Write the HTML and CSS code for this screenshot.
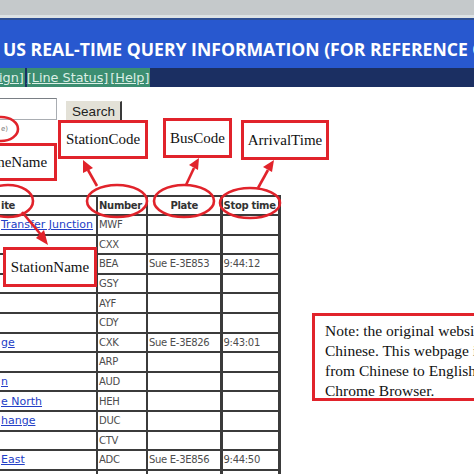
FILE: index.html
```html
<!DOCTYPE html>
<html>
<head>
<meta charset="utf-8">
<link rel="stylesheet" href="styles.css">
</head>
<body>
<div class="page">
  <div class="chrome"></div>
  <div class="title">US REAL-TIME QUERY INFORMATION (FOR REFERENCE ONLY)</div>
  <div class="nav">
    <span class="hl"><a href="#">ign]</a></span><span class="hl hl-wide"><a href="#">[Line Status]</a><a href="#">[Help]</a></span>
  </div>
  <div class="main">
    <div class="search">
      <input class="field" type="text">
      <button class="btn">Search</button>
    </div>
    <div class="hint">e)</div>
    <table class="grid">
      <tr class="head"><th class="c1">ite</th><th class="c2">Number</th><th class="c3">Plate</th><th class="c4">Stop time</th></tr>
      <tr><td><a href="#">Transfer Junction</a></td><td>MWF</td><td></td><td></td></tr>
      <tr><td></td><td>CXX</td><td></td><td></td></tr>
      <tr><td></td><td>BEA</td><td>Sue E-3E853</td><td>9:44:12</td></tr>
      <tr><td></td><td>GSY</td><td></td><td></td></tr>
      <tr><td></td><td>AYF</td><td></td><td></td></tr>
      <tr><td></td><td>CDY</td><td></td><td></td></tr>
      <tr><td><a href="#">ge</a></td><td>CXK</td><td>Sue E-3E826</td><td>9:43:01</td></tr>
      <tr><td></td><td>ARP</td><td></td><td></td></tr>
      <tr><td><a href="#">n</a></td><td>AUD</td><td></td><td></td></tr>
      <tr><td><a href="#">e North</a></td><td>HEH</td><td></td><td></td></tr>
      <tr><td><a href="#">hange</a></td><td>DUC</td><td></td><td></td></tr>
      <tr><td></td><td>CTV</td><td></td><td></td></tr>
      <tr><td><a href="#">East</a></td><td>ADC</td><td>Sue E-3E856</td><td>9:44:50</td></tr>
      <tr><td></td><td></td><td></td><td></td></tr>
    </table>
  </div>

  <div class="label l-line">LineName</div>
  <div class="label l-code">StationCode</div>
  <div class="label l-bus">BusCode</div>
  <div class="label l-time">ArrivalTime</div>
  <div class="label l-name">StationName</div>

  <svg class="marks" width="474" height="474" viewBox="0 0 474 474">
    <g fill="none" stroke="#e1232b" stroke-width="2.6">
      <ellipse cx="1" cy="129" rx="17" ry="12"/>
      <ellipse cx="8" cy="201" rx="25" ry="16"/>
      <ellipse cx="117" cy="201" rx="30" ry="16"/>
      <ellipse cx="184" cy="201" rx="30" ry="16"/>
      <ellipse cx="250" cy="203" rx="30" ry="15"/>
      <line x1="22" y1="212" x2="42" y2="236"/>
      <line x1="97" y1="186" x2="88" y2="170"/>
      <line x1="186" y1="185" x2="194" y2="168"/>
      <line x1="258" y1="188" x2="268" y2="170"/>
    </g>
    <g fill="#e1232b">
      <polygon points="48,245 36,238 44,230"/>
      <polygon points="83,160 83,173 93,168"/>
      <polygon points="199,158 189,165 198,170"/>
      <polygon points="274,160 263,167 272,172"/>
    </g>
  </svg>

  <div class="note">Note: the original website is in<br>Chinese. This webpage is translated<br>from Chinese to English by<br>Chrome Browser.</div>
</div>
</body>
</html>
```

FILE: styles.css
```css
* { box-sizing: border-box; }
html, body { margin: 0; padding: 0; background: #ffffff; }
.page {
  position: relative;
  width: 474px;
  height: 474px;
  overflow: hidden;
  background: #ffffff;
}
.chrome {
  height: 20px;
  background: #c5c9cb;
  border-bottom: 2px solid #2f4f93;
  box-shadow: inset 0 -3px 0 #dde2e4;
}
.title {
  height: 48px;
  background: #2858cf;
  color: #ffffff;
  font-family: "Open Sans", "DejaVu Sans", sans-serif;
  font-weight: 700;
  font-size: 17.6px;
  line-height: 20px;
  padding: 19px 0 0 3px;
  white-space: nowrap;
  overflow: hidden;
}
.nav {
  height: 19px;
  background: #1b2f62;
  display: flex;
  align-items: stretch;
  font-family: "DejaVu Sans", sans-serif;
  font-size: 12.8px;
  line-height: 19px;
}
.hl {
  background: #3c8e71;
  display: flex;
  gap: 2px;
  padding: 0 1px 0 0;
}
.hl-wide { margin-left: 2px; }
.hl:first-child { margin-left: -1px; }
.nav a { color: #dcefe6; text-decoration: underline; }
.main { padding-top: 11px; position: relative; }
.search {
  display: flex;
  align-items: flex-start;
  gap: 9px;
  height: 23px;
}
.field {
  width: 72px;
  height: 22px;
  margin: 0 0 0 -15px;
  border: 1px solid #a9adb2;
  border-top-color: #7a7f85;
  background: #fff;
}
.btn {
  margin-top: 3px;
  width: 56px;
  height: 20px;
  padding: 0;
  background: #e3e1d7;
  border: 1px solid #e3e1d7;
  border-right: 2px solid #3a3a3a;
  border-bottom: 1px solid #8a8a80;
  font-family: "Liberation Sans", sans-serif;
  font-size: 13.5px;
  color: #222;
}
.hint {
  font-family: "DejaVu Sans", sans-serif;
  font-size: 7px;
  color: #777;
  line-height: 8px;
  height: 8px;
  margin-top: 4px;
  padding-left: 1px;
}
.grid {
  margin-top: 62px;
  margin-left: -2px;
  border-collapse: collapse;
  table-layout: fixed;
  width: 282px;
  font-family: "DejaVu Sans", sans-serif;
}
.grid th, .grid td {
  border: 2px solid #3b3b3b;
  padding: 0 0 0 1px;
  white-space: nowrap;
  overflow: hidden;
  text-align: left;
  vertical-align: middle;
}
.grid tr { height: 19.6px; }
.grid tr.head { height: 19px; }
.grid th {
  font-size: 10px;
  font-weight: 700;
  color: #333;
  letter-spacing: -0.3px;
}
.grid th.c3 { text-align: center; }
.grid td {
  font-size: 10px;
  color: #4d4d4d;
  letter-spacing: -0.3px;
}
.grid td a {
  font-size: 11px;
  letter-spacing: 0;
  color: #2340c6;
  text-decoration: underline;
}
.grid .c1 { width: 98px; }
.grid .c2 { width: 50px; }
.grid .c3 { width: 74px; }
.grid .c4 { width: 58px; }
.grid th:nth-child(4), .grid td:nth-child(4) {
  border-left-width: 3px;
  border-right-width: 3px;
}
.label {
  position: absolute;
  background: #ffffff;
  border: 3px solid #e1232b;
  font-family: "Liberation Serif", serif;
  font-size: 15px;
  color: #111;
  display: flex;
  align-items: center;
  justify-content: center;
  white-space: nowrap;
}
.l-line { left: -26px; top: 143px; width: 83px; height: 38px; }
.l-code { left: 58px; top: 120px; width: 90px; height: 39px; }
.l-bus { left: 163px; top: 118px; width: 69px; height: 40px; }
.l-time { left: 241px; top: 120px; width: 88px; height: 40px; }
.l-name { left: 3px; top: 247px; width: 94px; height: 40px; }
.marks {
  position: absolute;
  left: 0;
  top: 0;
  pointer-events: none;
}
.note {
  position: absolute;
  left: 312px;
  top: 313px;
  width: 200px;
  height: 88px;
  border: 3px solid #e1232b;
  background: #fff;
  padding: 5px 0 0 10px;
  font-family: "Liberation Serif", serif;
  font-size: 15.5px;
  line-height: 20px;
  color: #111;
  white-space: nowrap;
}
```
